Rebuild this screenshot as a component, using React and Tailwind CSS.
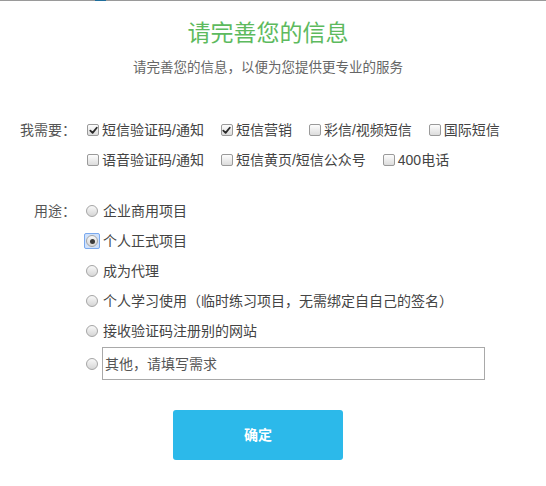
import React from "react";

const FONT = { fontFamily: '"Liberation Sans", "Noto Sans CJK SC", sans-serif' };

function Check({ checked }) {
  return (
    <span className="relative inline-flex h-[12px] w-[12px] shrink-0 items-center justify-center rounded-[2px] border border-[#9a9a9a] bg-gradient-to-b from-[#fdfdfd] to-[#dcdcdc]">
      {checked && (
        <svg viewBox="0 0 10 10" className="h-[9px] w-[9px]">
          <path d="M1.5 5.2 L4 7.6 L8.6 2" fill="none" stroke="#2a2a2a" strokeWidth="2" strokeLinecap="round" strokeLinejoin="round" />
        </svg>
      )}
    </span>
  );
}

function Radio({ checked }) {
  const dot = (
    <span className="inline-flex h-[12px] w-[12px] shrink-0 items-center justify-center rounded-full border border-[#a5a5a5] bg-gradient-to-b from-[#f8f8f8] to-[#d6d6d6]">
      {checked && <span className="h-[5px] w-[5px] rounded-full bg-[#3a3a3a]" />}
    </span>
  );
  if (checked) {
    return (
      <span className="-m-[2px] inline-flex h-[16px] w-[16px] shrink-0 items-center justify-center rounded-[2px] border border-[#7aa9ee] bg-[#cfe1fb]">
        {dot}
      </span>
    );
  }
  return dot;
}

function CheckItem({ label, checked }) {
  return (
    <label className="flex h-[30px] items-center">
      <Check checked={checked} />
      <span className="ml-[3px] text-[14px] text-[#444]">{label}</span>
    </label>
  );
}

function RadioItem({ label, checked }) {
  return (
    <div className="flex h-[30px] items-center">
      <Radio checked={checked} />
      <span className="ml-[5px] text-[14px] text-[#444]">{label}</span>
    </div>
  );
}

export default function App() {
  return (
    <div className="min-h-[486px] w-[546px] bg-white" style={FONT}>
      <div className="flex h-px w-full bg-[#9a9a9a]">
        <div className="ml-[95px] h-px w-[11px] bg-[#1f6e9c]" />
      </div>

      <div className="pr-[10px] text-center">
        <h1 className="mt-[16px] text-[23px] leading-[32px] text-[#5dba5e]">请完善您的信息</h1>
        <p className="mt-[9px] text-[13.5px] leading-[20px] text-[#666]">请完善您的信息，以便为您提供更专业的服务</p>
      </div>

      <div className="mt-[37px] flex">
        <div className="w-[76px] shrink-0 text-right text-[14px] leading-[30px] text-[#555]">我需要：</div>
        <div className="ml-[11px] flex w-[450px] flex-wrap gap-x-[17px]">
          <CheckItem label="短信验证码/通知" checked />
          <CheckItem label="短信营销" checked />
          <CheckItem label="彩信/视频短信" />
          <CheckItem label="国际短信" />
          <CheckItem label="语音验证码/通知" />
          <CheckItem label="短信黄页/短信公众号" />
          <CheckItem label="400电话" />
        </div>
      </div>

      <div className="mt-[21px] flex">
        <div className="w-[76px] shrink-0 text-right text-[14px] leading-[30px] text-[#555]">用途：</div>
        <div className="ml-[10px] flex flex-col">
          <RadioItem label="企业商用项目" />
          <RadioItem label="个人正式项目" checked />
          <RadioItem label="成为代理" />
          <RadioItem label="个人学习使用（临时练习项目，无需绑定自自己的签名）" />
          <RadioItem label="接收验证码注册别的网站" />
          <div className="mt-px flex h-[33px] items-center">
            <Radio />
            <input
              className="ml-[4px] h-[33px] w-[383px] border border-[#a9a9a9] px-[2px] text-[14px] text-[#444] outline-none placeholder:text-[#555]"
              placeholder="其他，请填写需求"
              style={FONT}
            />
          </div>
        </div>
      </div>

      <button className="ml-[173px] mt-[30px] flex h-[50px] w-[170px] items-center justify-center rounded-[3px] bg-[#2cb9ea] text-[14px] font-bold text-white">
        确定
      </button>
    </div>
  );
}
